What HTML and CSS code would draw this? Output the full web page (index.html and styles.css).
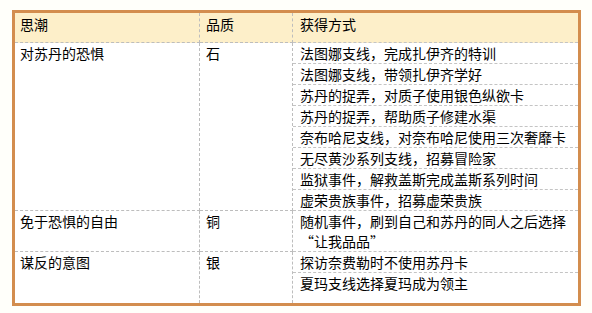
FILE: index.html
```html
<!DOCTYPE html>
<html lang="zh-CN">
<head>
<meta charset="utf-8">
<link rel="stylesheet" href="styles.css">
</head>
<body>
<table class="tbl">
  <thead>
    <tr>
      <th class="c1">思潮</th>
      <th class="c2">品质</th>
      <th class="c3">获得方式</th>
    </tr>
  </thead>
  <tbody>
    <tr>
      <td class="c1" rowspan="8">对苏丹的恐惧</td>
      <td class="c2" rowspan="8">石</td>
      <td class="c3">法图娜支线，完成扎伊齐的特训</td>
    </tr>
    <tr><td class="c3">法图娜支线，带领扎伊齐学好</td></tr>
    <tr><td class="c3">苏丹的捉弄，对质子使用银色纵欲卡</td></tr>
    <tr><td class="c3">苏丹的捉弄，帮助质子修建水渠</td></tr>
    <tr><td class="c3">奈布哈尼支线，对奈布哈尼使用三次奢靡卡</td></tr>
    <tr><td class="c3">无尽黄沙系列支线，招募冒险家</td></tr>
    <tr><td class="c3">监狱事件，解救盖斯完成盖斯系列时间</td></tr>
    <tr><td class="c3">虚荣贵族事件，招募虚荣贵族</td></tr>
    <tr>
      <td class="c1">免于恐惧的自由</td>
      <td class="c2">铜</td>
      <td class="c3">随机事件，刷到自己和苏丹的同人之后选择<br>“让我品品”</td>
    </tr>
    <tr class="last">
      <td class="c1 end" rowspan="2">谋反的意图</td>
      <td class="c2 end" rowspan="2">银</td>
      <td class="c3">探访奈费勒时不使用苏丹卡</td>
    </tr>
    <tr><td class="c3 end tall">夏玛支线选择夏玛成为领主</td></tr>
  </tbody>
</table>
</body>
</html>
```

FILE: styles.css
```css
html, body {
  margin: 0;
  padding: 0;
  background: #fffffa;
}
body {
  font-family: "Noto Sans CJK SC", "Noto Sans", sans-serif;
  font-size: 14px;
  color: #000;
}
.tbl {
  margin: 10px 0 0 12px;
  width: 569px;
  box-sizing: border-box;
  table-layout: fixed;
  border-collapse: separate;
  border-spacing: 0;
  border: 3px solid #d38d4e;
  background: #fff;
}
.tbl th, .tbl td {
  box-sizing: border-box;
  padding: 0 4px 0 5px;
  line-height: 20px;
  height: 21px;
  vertical-align: top;
  text-align: left;
  font-weight: normal;
  border-right: 1px dashed #bdbdbd;
  border-bottom: 1px dashed #bdbdbd;
  white-space: nowrap;
}
.tbl th {
  background: #fdefc9;
  height: 30px;
  padding-top: 1px;
}
.tbl .c1 { width: 185px; }
.tbl .c2 { width: 93px; padding-left: 6px; }
.tbl .c3 { width: 285px; border-right: none; padding-left: 7px; border-bottom-color: #c4c4c4; }
.tbl .end { border-bottom: none; }
.tbl .tall { height: 30px; }
```
